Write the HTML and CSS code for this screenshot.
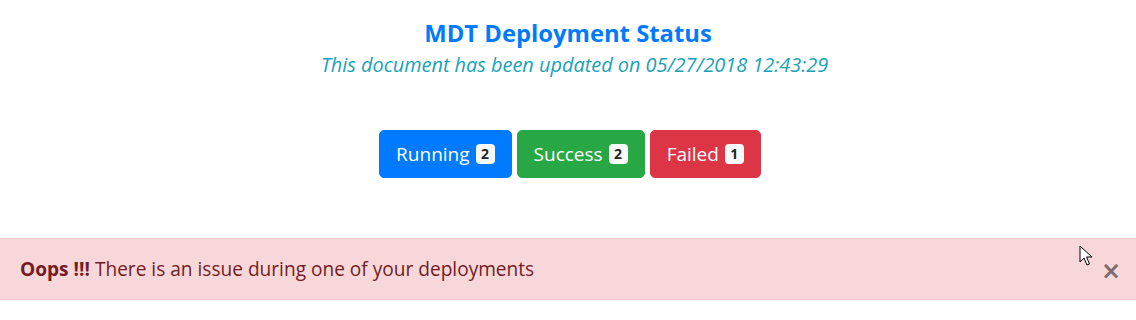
FILE: index.html
```html
<!DOCTYPE html>
<html lang="en">
<head>
<meta charset="utf-8">
<title>MDT Deployment Status</title>
<link rel="stylesheet" href="styles.css">
</head>
<body>
<header class="header">
  <h3 class="title">MDT Deployment Status</h3>
  <p class="subtitle">This document has been updated on 05/27/2018 12:43:29</p>
</header>
<div class="btn-row">
  <button class="btn btn-primary">Running <span class="badge">2</span></button>
  <button class="btn btn-success">Success <span class="badge">2</span></button>
  <button class="btn btn-danger">Failed <span class="badge">1</span></button>
</div>
<div class="alert">
  <span><strong>Oops !!!</strong> There is an issue during one of your deployments</span>
  <button class="close" aria-label="Close">&times;</button>
  <svg class="cursor" width="14" height="22" viewBox="0 0 14 22"><path d="M1 1 L1 17 L5 13 L8 20 L10.5 19 L7.5 12 L13 12 Z" fill="#fff" stroke="#000" stroke-width="1" stroke-linejoin="round"/></svg>
</div>
</body>
</html>
```
FILE: styles.css
```css
* { box-sizing: border-box; }
html, body { margin: 0; padding: 0; background: #fff; }
body {
  font-family: "Open Sans", "Noto Sans", sans-serif;
  color: #212529;
  width: 1136px;
  height: 320px;
  overflow: hidden;
}
.header {
  text-align: center;
  padding-top: 16px;
}
.title {
  margin: 0;
  font-size: 23.8px;
  font-weight: 700;
  line-height: 34px;
  color: #007bff;
}
.subtitle {
  margin: 0;
  padding-left: 13px;
  font-size: 19.9px;
  font-style: italic;
  line-height: 30px;
  color: #17a2b8;
}
.btn-row {
  display: flex;
  justify-content: center;
  gap: 5px;
  margin-top: 50px;
  padding-left: 4px;
}
.btn {
  font-family: inherit;
  font-size: 19px;
  line-height: 28px;
  padding: 9px 16px;
  height: 48px;
  border: 1px solid transparent;
  border-radius: 5px;
  color: #fff;
  display: flex;
  align-items: center;
  gap: 6px;
}
.btn-primary { background: #007bff; border-color: #007bff; }
.btn-success { background: #28a745; border-color: #28a745; }
.btn-danger { background: #dc3545; border-color: #dc3545; }
.badge {
  display: inline-flex;
  align-items: center;
  justify-content: center;
  min-width: 19px;
  height: 20px;
  padding: 0 4px;
  font-size: 14px;
  font-weight: 700;
  background: #f8f9fa;
  color: #212529;
  border-radius: 4px;
}
.alert {
  position: relative;
  margin-top: 60px;
  height: 62px;
  display: flex;
  align-items: center;
  padding: 0 20px;
  background: #f8d7da;
  border-top: 1px solid #f5c6cb;
  border-bottom: 1px solid #f5c6cb;
  color: #721c24;
  font-size: 19.1px;
}
.alert strong { font-weight: 700; }
.close {
  margin-left: auto;
  margin-top: 3px;
  margin-right: -5px;
  background: none;
  border: 0;
  padding: 0;
  font-family: "DejaVu Sans", sans-serif;
  font-size: 24px;
  font-weight: 700;
  line-height: 1;
  color: #000;
  opacity: .5;
}
.cursor {
  position: absolute;
  left: 1079px;
  top: 6px;
}
```
